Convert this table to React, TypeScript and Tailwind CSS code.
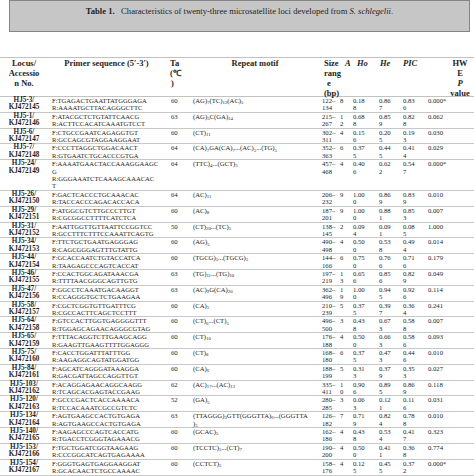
import React from "react"

// locus, accession, primers, Ta, repeat motif, size, A, Ho, He, PIC, HWE
const rows: string[][] = [
    ["HJ5-3/", "KJ472145", "F:TGAGACTGAATTATGGGAGA|R:AAAATGCTTACAGGGCTTC", "60", "(AG)_7(TC)_12(AC)_5", "122–|134", "8", "0.18|8", "0.86|7", "0.83|6", "0.000*"],
    ["HJ5-1/", "KJ472146", "F:ATACGCTCTGTATTCAACG|R:ACTTCCACATCAAATGTCCT", "63", "(AG)_5C(GA)_14", "215–|267", "1|2", "0.68|8", "0.85|9", "0.82|8", "0.062"],
    ["HJ5-6/", "KJ472147", "F:CTGCCGAATCAGAGGTGT|R:GCCAGCGTAGGAAGGAAT", "60", "(CT)_11", "302–|311", "4", "0.15|6", "0.20|5", "0.19|3", "0.030"],
    ["HJ5-7/", "KJ472148", "F:CCCTTAGGCTGGACAACT|R:GTGAATCTGCACCCGTGA", "64", "(CA)_7GA(CA)_7...(AC)_5...(TG)_5", "352–|363", "6", "0.37|5", "0.44|5", "0.41|4", "0.029"],
    ["HJ5-24/", "KJ472149", "F:AAAATGAACTACCAAAGGAAGC|G|R:GGGAAATCTCAAAGCAAACAC|T", "64", "(TTC)_4...(GCT)_5", "457–|468", "4", "0.40|6", "0.62|2", "0.54|7", "0.000*"],
    ["HJ5-26/", "KJ472150", "F:GACTCACCCTGCAAACAC|R:TACCACCCAGACACCACA", "64", "(AC)_11", "206–|232", "9", "1.00|0", "0.86|9", "0.83|9", "0.010"],
    ["HJ5-29/", "KJ472151", "F:ATGGCGTCTTGCCCTTGT|R:CGCGGCCTTTTCATCTCA", "60", "(AC)_8", "187–|201", "9", "1.00|0", "0.88|1", "0.85|3", "0.007"],
    ["HJ5-31/", "KJ472152", "F:AATTGGTTGTTAATTCCGGTCC|R:GCCTTTCTTTCCAAATTCAGTG", "50", "(CT)_20...(TC)_5", "138–|145", "2", "0.09|4", "0.09|1", "0.08|5", "1.000"],
    ["HJ5-34/", "KJ472153", "F:TTCTGCTGAATGAGGGAG|R:CAGCGGGAGTTTGTATTG", "60", "(AG)_5", "490–|498", "4", "0.50|0", "0.53|8", "0.49|4", "0.014"],
    ["HJ5-44/", "KJ472154", "F:GCACCAATCTGTACCATCA|R:TAAGAGCCCAGTCACCAT", "60", "(TGCG)_5...(TGCG)_5", "144–|166", "6", "0.75|0", "0.76|6", "0.71|6", "0.179"],
    ["HJ5-46/", "KJ472155", "F:CCACTGGCAGATAAACGA|R:TTTTAACGGGCAGTTGTG", "63", "(TG)_11...(TG)_10", "197–|219", "1|3", "0.65|6", "0.85|6", "0.82|9", "0.049"],
    ["HJ5-47/", "KJ472156", "F:GGCCTCAAATGACAAGGT|R:CCAGGGTGCTCTGAAGAA", "63", "(AC)_9G(CA)_20", "362–|496", "1|9", "1.00|0", "0.94|5", "0.92|6", "0.114"],
    ["HJ5-58/", "KJ472157", "F:CGCTCGGTGTTGATTTCG|R:CGCCACTTCAGCTCCTTT", "60", "(CA)_5", "210–|239", "5", "0.37|5", "0.39|7", "0.36|4", "0.241"],
    ["HJ5-64/", "KJ472158", "F:GTCCACTTGGTGAGGGGTTT|R:TGGAGCAGAACAGGGCGTAG", "60", "(CT)_6...(CT)_5", "496–|500", "3", "0.43|8", "0.67|3", "0.58|8", "0.007"],
    ["HJ5-65/", "KJ472159", "F:TTTACAGGTCTTGAAGCAGG|R:GAAGTTGAAGTTTTGGAGGG", "60", "(CT)_10", "176–|188", "4", "0.50|0", "0.66|3", "0.58|6", "0.093"],
    ["HJ5-75/", "KJ472160", "F:CACCTGGATTTATTTGG|R:AAGAGGCAGTATGGATGG", "60", "(CT)_8", "168–|180", "6", "0.37|5", "0.47|3", "0.44|6", "0.010"],
    ["HJ5-84/", "KJ472161", "F:AGCATCAGGGATAAAGGA|R:GACGATTAGCCAGGTTGT", "60", "(CA)_6", "188–|199", "5", "0.31|3", "0.37|9", "0.35|3", "0.027"],
    ["HJ5-103/", "KJ472162", "F:ACAGGAGAACAGGCAAGG|R:TCAGCACGAGTACCGAAG", "62", "(AC)_17...(AC)_12", "335–|411", "1|0", "0.90|6", "0.89|5", "0.86|9", "0.118"],
    ["HJ5-120/", "KJ472163", "F:GCCCGACTCACCAAAACA|R:TCCACAAATCGCCGTCTC", "52", "(GA)_5", "280–|285", "3", "0.06|3", "0.12|1", "0.11|6", "0.031"],
    ["HJ5-134/", "KJ472164", "F:AGTGAAGCCACTGTGAGA|R:AGTGAAGCCACTGTGAGA", "63", "(TTAGGG)_3GTT(GGGTTA)_6...(GGGTTA|)_5", "126–|182", "7", "0.71|9", "0.82|4", "0.78|8", "0.010"],
    ["HJ5-140/", "KJ472165", "F:AAGAGCCCAGTCACCATG|R:TGACCTCGGGTAGAAACG", "60", "(GCAC)_5", "162–|186", "4", "0.43|8", "0.53|4", "0.41|7", "0.323"],
    ["HJ5-153/", "KJ472166", "F:TGCTGGATCGGTAAGAAG|R:CCCGGCATCAGTGAGAAAA", "60", "(TCCTC)_5...(CT)_7", "190–|200", "4", "0.50|0", "0.41|1", "0.36|8", "0.774"],
    ["HJ5-154/", "KJ472167", "F:GGGTGAGTGAGGAAGGAT|R:GCACAACTCTGCCAAAAC", "60", "(CCTCT)_5", "158–|176", "4", "0.12|5", "0.45|5", "0.37|2", "0.000*"],
]

const grid = "grid grid-cols-[48px_117px_25px_130px_18px_14px_25px_24px_24px_49px]"

const Motif = ({ text }: { text: string }) => {
    const parts = text.split(/_(\d+)/)
    return <>{parts.map((p, i) => i % 2 ? <sub key={i} className="text-[4.8px]">{p}</sub> : <span key={i}>{p}</span>)}</>
}

const Lines = ({ text }: { text: string }) => <>{text.split("|").map((l, i) => <div key={i} className="whitespace-nowrap">{l}</div>)}</>

const App = () => {
    return <div className="w-[474px] h-[476px] overflow-hidden bg-white text-[#1e1e1e] font-['Liberation_Serif',serif]">
        <div className="ml-[9px] w-[461px] h-[32px] bg-[#c6c6c6] border border-[#858585] pt-[5px] text-center text-[8.6px] leading-[10px]">
            <span className="font-bold">Table 1.</span>&nbsp;&nbsp; Characteristics of twenty-three microsatellite loci developed from <i>S. schlegelii</i>.
        </div>
        <div className={`${grid} mt-[25px] border-t border-b border-[#c2c2c2] font-bold text-[8.5px] leading-[10px] h-[40px]`}>
            <div className="text-center"><div>Locus/</div><div>Accessio</div><div>n No.</div></div>
            <div className="text-center whitespace-nowrap">Primer sequence (5′-3′)</div>
            <div className="pl-[5px]"><div>Ta</div><div>(℃</div><div className="pl-[1px]">)</div></div>
            <div className="text-center">Repeat motif</div>
            <div className="pl-[4px]"><div>Size</div><div>rang</div><div className="pl-[3px]">e</div><div>(bp)</div></div>
            <div className="pl-[7px] italic">A</div>
            <div className="pl-[5px] italic">Ho</div>
            <div className="pl-[3px] italic">He</div>
            <div className="pl-[2px] italic">PIC</div>
            <div className="pl-[22px] text-center w-[48px]"><div>HW</div><div>E</div><div className="italic">P</div><div>value</div></div>
        </div>
        {rows.map((r) => (
            <div key={r[1]} className={`${grid} border-b border-[#c8c8c8] text-[6.7px] leading-[7.4px]`}>
                <div className="text-center font-bold text-[7.2px]"><div>{r[0]}</div><div>{r[1]}</div></div>
                <div className="pl-[4px] text-[6.6px]"><Lines text={r[2]}/></div>
                <div className="pl-[6px]">{r[3]}</div>
                <div className="pl-[3px] whitespace-nowrap">{r[4].split("|").map((m, i) => <div key={i}><Motif text={m}/></div>)}</div>
                <div className="pl-[2px]"><Lines text={r[5]}/></div>
                <div className="pl-[2px]"><Lines text={r[6]}/></div>
                <div className="pl-[1px]"><Lines text={r[7]}/></div>
                <div className="pl-[2px]"><Lines text={r[8]}/></div>
                <div className="pl-[2px]"><Lines text={r[9]}/></div>
                <div className="pl-[3px]">{r[10]}</div>
            </div>
        ))}
    </div>
}

export default App
